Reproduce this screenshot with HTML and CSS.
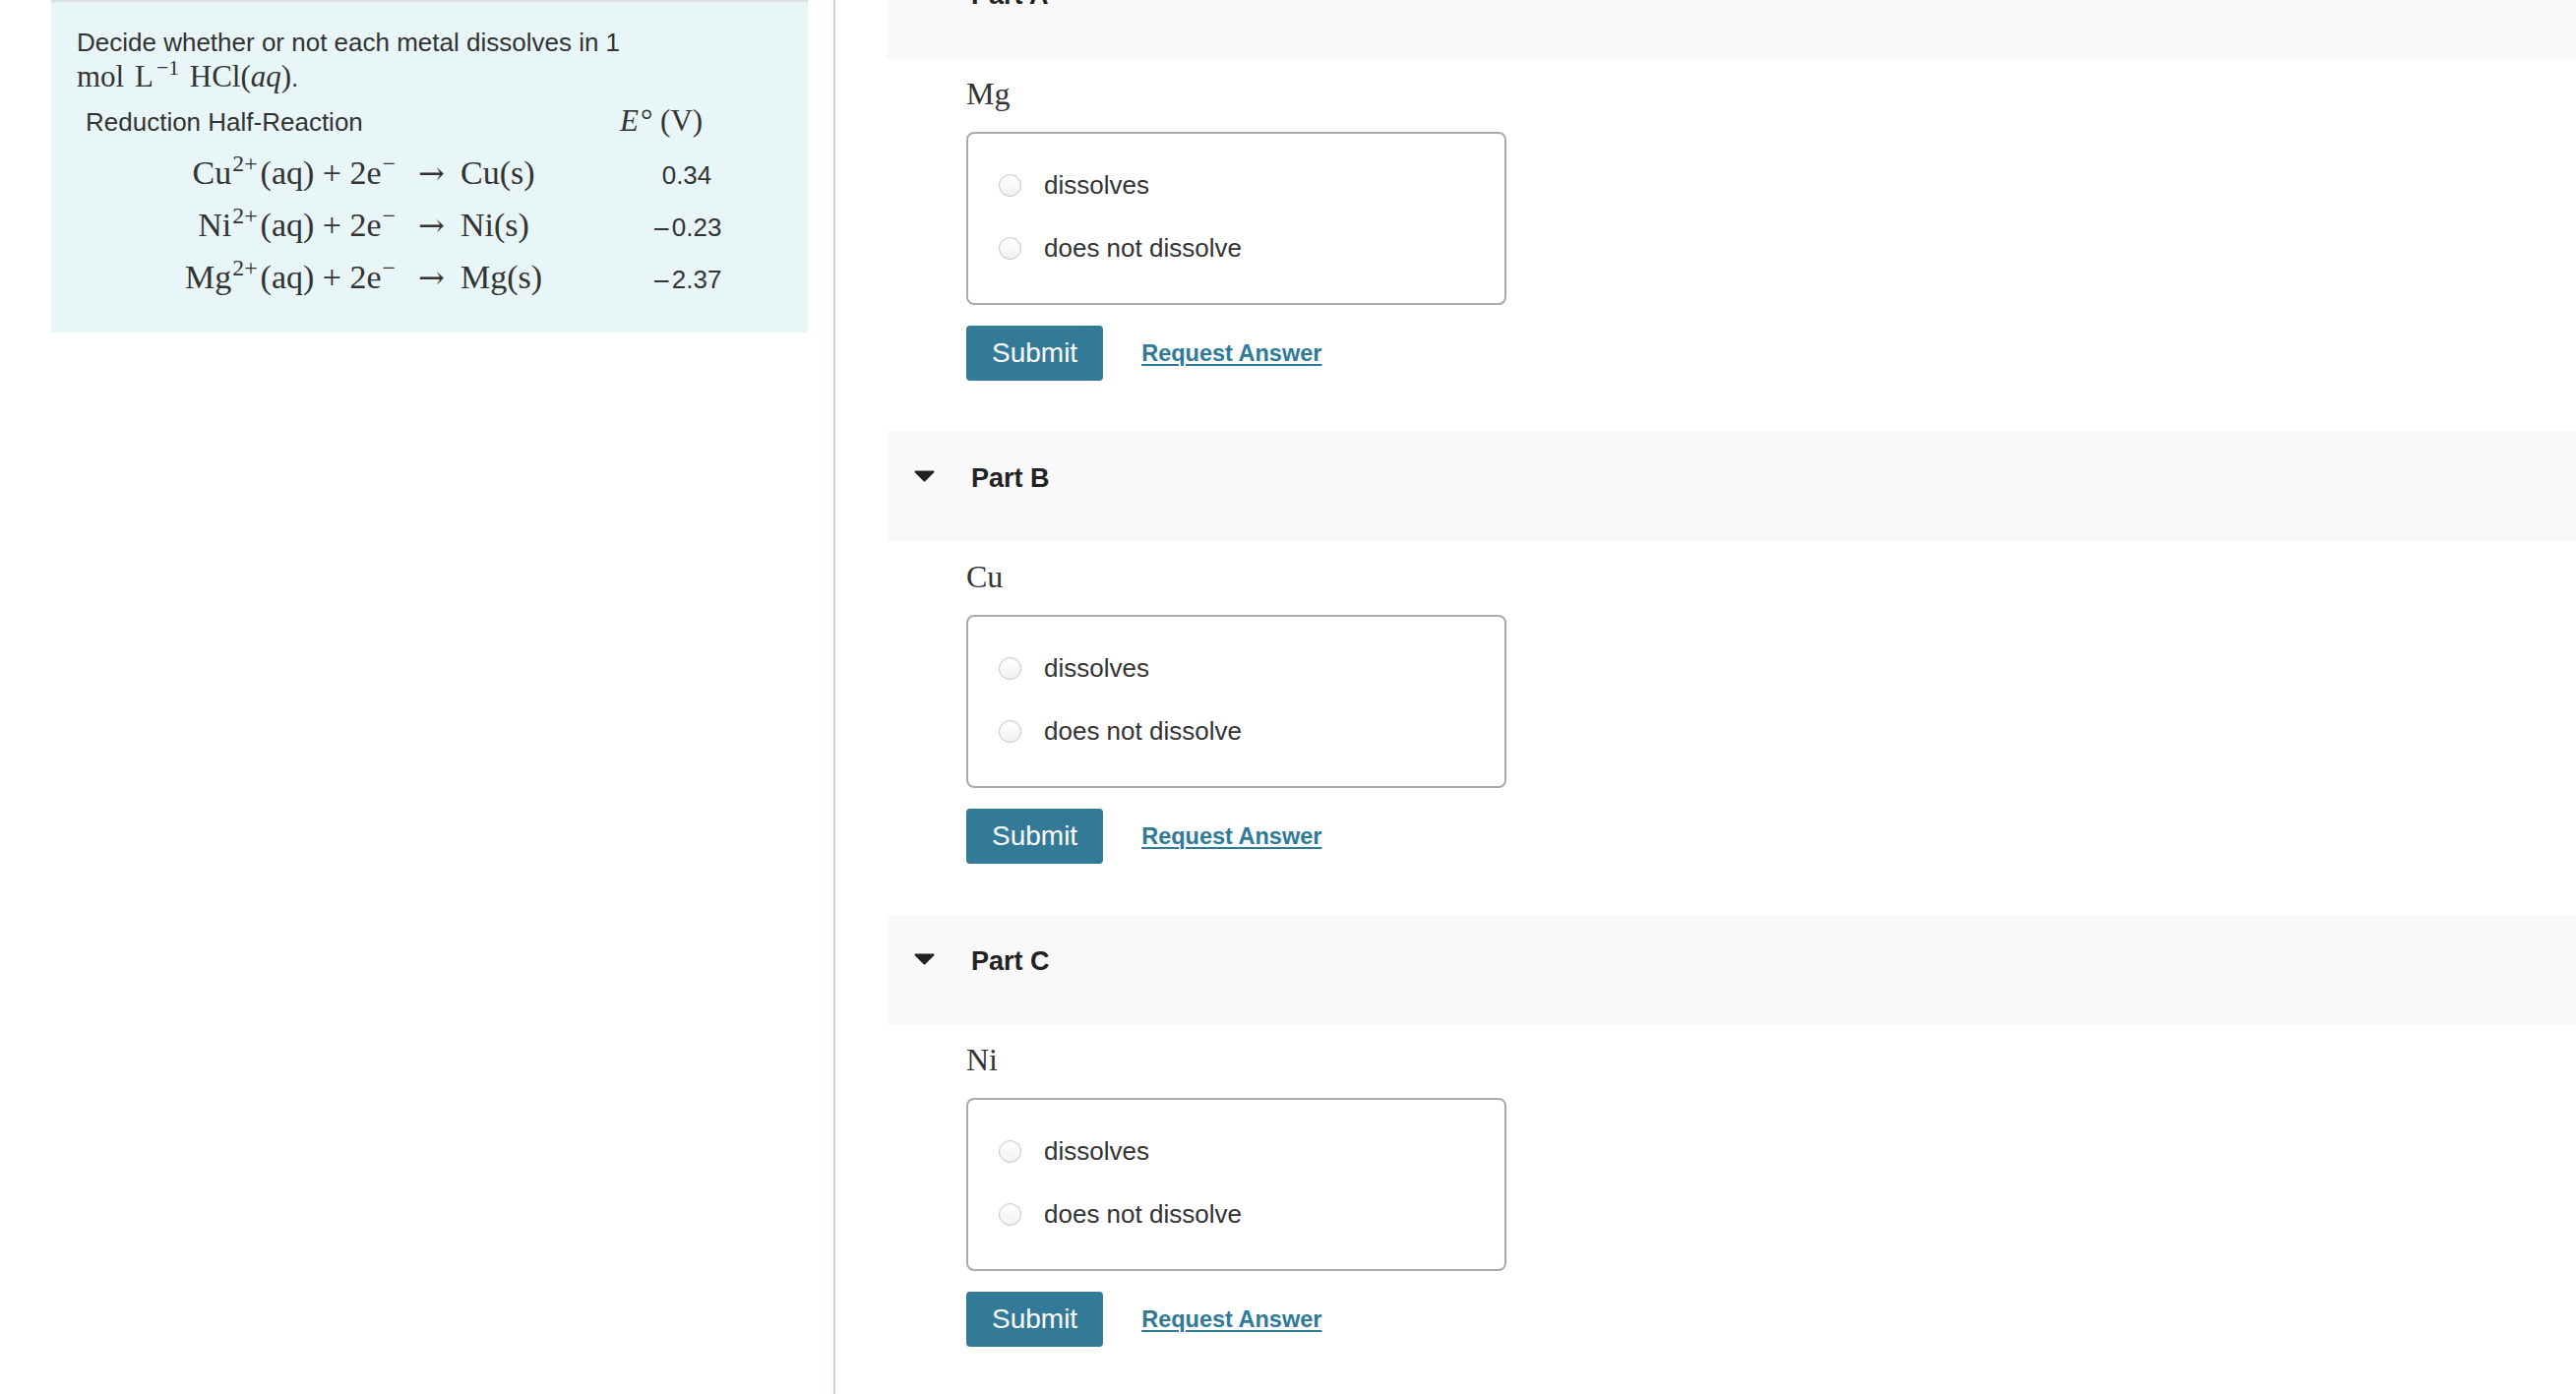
FILE: index.html
```html
<!DOCTYPE html>
<html lang="en">
<head>
	<meta charset="UTF-8">
	<title>Metals in HCl</title>
	<link rel="stylesheet" href="styles.css">
</head>
<body>
	<div class="page">
		<aside class="sidebar">
			<div class="problem">
				<p class="intro">Decide whether or not each metal dissolves in 1<br><span class="math">mol L<sup>−1</sup> HCl(<i>aq</i>)</span>.</p>
				<div class="reactions">
					<div class="head-label">Reduction Half-Reaction</div>
					<div class="head-value math"><i>E</i>° (V)</div>

					<div class="lhs math">Cu<sup>2+</sup>(aq) + 2e<sup>−</sup></div>
					<div class="arrow">→</div>
					<div class="rhs math">Cu(s)</div>
					<div class="value">0.34</div>

					<div class="lhs math">Ni<sup>2+</sup>(aq) + 2e<sup>−</sup></div>
					<div class="arrow">→</div>
					<div class="rhs math">Ni(s)</div>
					<div class="value"><span class="minus">−</span>0.23</div>

					<div class="lhs math">Mg<sup>2+</sup>(aq) + 2e<sup>−</sup></div>
					<div class="arrow">→</div>
					<div class="rhs math">Mg(s)</div>
					<div class="value"><span class="minus">−</span>2.37</div>
				</div>
			</div>
		</aside>

		<main class="parts">
			<section class="part">
				<header class="part-header">
					<svg class="caret" width="21" height="12" viewBox="0 0 21 12"><path d="M1.5 1.5 H19.5 L10.5 10.5 Z" fill="#222" stroke="#222" stroke-width="2" stroke-linejoin="round"/></svg>
					<h2>Part A</h2>
				</header>
				<div class="part-body">
					<div class="metal">Mg</div>
					<div class="choices">
						<label class="choice"><input type="radio" name="partA"> dissolves</label>
						<label class="choice"><input type="radio" name="partA"> does not dissolve</label>
					</div>
					<div class="actions">
						<button class="submit">Submit</button>
						<a href="#" class="request">Request Answer</a>
					</div>
				</div>
			</section>

			<section class="part">
				<header class="part-header">
					<svg class="caret" width="21" height="12" viewBox="0 0 21 12"><path d="M1.5 1.5 H19.5 L10.5 10.5 Z" fill="#222" stroke="#222" stroke-width="2" stroke-linejoin="round"/></svg>
					<h2>Part B</h2>
				</header>
				<div class="part-body">
					<div class="metal">Cu</div>
					<div class="choices">
						<label class="choice"><input type="radio" name="partB"> dissolves</label>
						<label class="choice"><input type="radio" name="partB"> does not dissolve</label>
					</div>
					<div class="actions">
						<button class="submit">Submit</button>
						<a href="#" class="request">Request Answer</a>
					</div>
				</div>
			</section>

			<section class="part">
				<header class="part-header">
					<svg class="caret" width="21" height="12" viewBox="0 0 21 12"><path d="M1.5 1.5 H19.5 L10.5 10.5 Z" fill="#222" stroke="#222" stroke-width="2" stroke-linejoin="round"/></svg>
					<h2>Part C</h2>
				</header>
				<div class="part-body">
					<div class="metal">Ni</div>
					<div class="choices">
						<label class="choice"><input type="radio" name="partC"> dissolves</label>
						<label class="choice"><input type="radio" name="partC"> does not dissolve</label>
					</div>
					<div class="actions">
						<button class="submit">Submit</button>
						<a href="#" class="request">Request Answer</a>
					</div>
				</div>
			</section>
		</main>
	</div>
</body>
</html>
```

FILE: styles.css
```css
html, body {
	margin: 0;
	padding: 0;
	height: 100%;
	overflow: hidden;
}

body {
	background: #fff;
	color: #333;
	font-family: "Liberation Sans", Arial, Helvetica, sans-serif;
	font-size: 26px;
}

p, h2 {
	margin: 0;
}

.page {
	display: flex;
	min-height: 100vh;
}

/* left column with the problem text */
.sidebar {
	width: 847px;
	flex-shrink: 0;
	border-right: 2px solid #c5d0df;
}

.problem {
	width: 769px;
	margin-left: 52px;
	box-sizing: border-box;
	background: #e8f6f7;
	border-top: 2px solid #dcdfe0;
	padding: 23px 0 30px 26px;
}

.intro {
	line-height: 36px;
}

.math {
	font-family: "Liberation Serif", "Times New Roman", serif;
	white-space: nowrap;
}

.intro .math {
	font-size: 31px;
	line-height: 1;
	word-spacing: 3px;
}

sup {
	font-size: 0.7em;
	line-height: 0;
	vertical-align: 0.55em;
}

.intro sup {
	margin-left: 3px;
}

.lhs sup {
	margin-left: 1px;
	margin-right: 3px;
}

.reactions {
	display: grid;
	grid-template-columns: 318px 63px 162px 136px;
	grid-template-rows: 52px repeat(3, 53px);
	align-items: baseline;
	margin-left: 9px;
}

.reactions > div {
	line-height: 53px;
}

.head-label {
	grid-column: 1 / 4;
	line-height: 52px !important;
}

.head-value {
	font-size: 31px;
	line-height: 52px !important;
}

.head-value i {
	margin-right: 2px;
}

.lhs, .rhs {
	font-size: 34px;
}

.lhs {
	text-align: right;
}

.arrow {
	padding-left: 20px;
	font-family: "DejaVu Serif", serif;
	font-size: 32px;
	color: #333;
}

.rhs {
	text-align: left;
}

.value {
	text-align: center;
}

.minus {
	margin-right: 1px;
	font-family: "DejaVu Sans", sans-serif;
	font-size: 23px;
}

/* right column with the parts */
.parts {
	flex: 1;
	padding-left: 52px;
	margin-top: -52px;
}

.part-header {
	display: flex;
	align-items: center;
	height: 112px;
	box-sizing: border-box;
	padding: 0 0 18px 28px;
	background: #f9f9f9;
}

.caret {
	margin-bottom: 4px;
	margin-right: 37px;
}

.part-header h2 {
	font-size: 27px;
	font-weight: bold;
	line-height: 32px;
	color: #222;
}

.part-body {
	padding: 0 0 52px 81px;
}

.metal {
	font-family: "Liberation Serif", "Times New Roman", serif;
	font-size: 32px;
	line-height: 40px;
	margin: 15px 0 19px;
}

.choices {
	width: 549px;
	height: 176px;
	box-sizing: border-box;
	border: 2px solid #aaa;
	border-radius: 8px;
	padding: 20px 0 24px 31px;
}

.choice {
	display: flex;
	align-items: center;
	height: 64px;
	gap: 23px;
}

.choice input {
	appearance: none;
	-webkit-appearance: none;
	width: 23px;
	height: 23px;
	margin: 0;
	border-radius: 50%;
	border: 1px solid #c4c4c4;
	background: linear-gradient(#fff, #f1f1f1);
	box-shadow: inset 0 1px 1px rgba(0, 0, 0, 0.04);
}

.actions {
	display: flex;
	align-items: center;
	margin-top: 21px;
}

.submit {
	height: 56px;
	padding: 0 26px;
	border: none;
	border-radius: 4px;
	background: #337a99;
	color: #fff;
	font-family: inherit;
	font-size: 28px;
	cursor: pointer;
}

.request {
	margin-left: 39px;
	color: #2f7999;
	font-size: 23.5px;
	font-weight: bold;
	text-decoration: underline;
	text-decoration-thickness: 2px;
	text-underline-offset: 3px;
}
```
